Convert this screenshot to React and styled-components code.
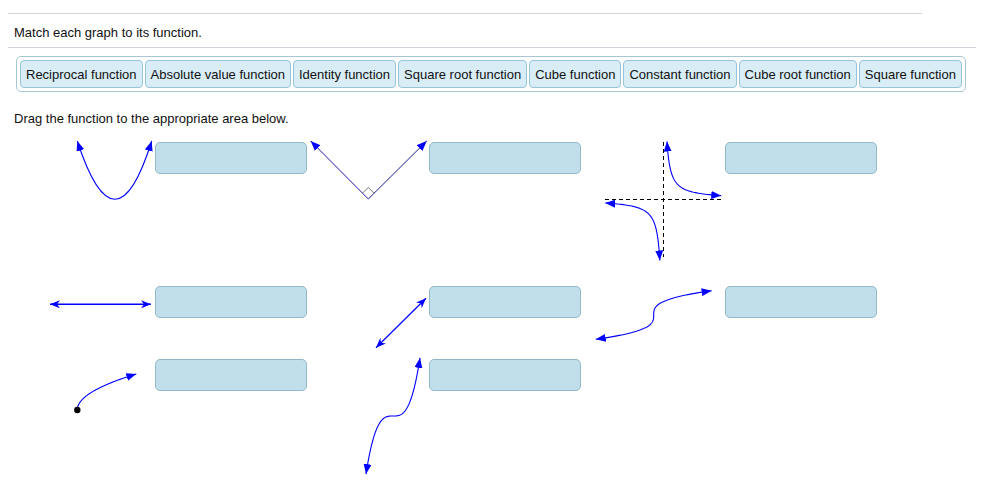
import React from "react";
import styled, { createGlobalStyle } from "styled-components";

const Global = createGlobalStyle`
  html, body { margin: 0; padding: 0; background: #fff; overflow: hidden; }
  body { font-family: "Liberation Sans", Arial, sans-serif; font-size: 13px; color: #111; }
`;

const Page = styled.div`
  width: 989px;
  height: 497px;
  display: flex;
  flex-direction: column;
  align-items: flex-start;
`;

const Rule = styled.div`
  width: ${(p) => p.$width}px;
  margin-left: 8px;
  margin-top: ${(p) => p.$top || 0}px;
  border-top: 1px solid #d3d3dc;
  height: 0;
`;

const Prompt = styled.div`
  padding: 11px 0 7px 14px;
  line-height: 15px;
`;

const Tray = styled.div`
  display: inline-flex;
  gap: 2px;
  margin: 8px 0 0 16px;
  padding: 3px;
  border: 1px solid #a8c6d2;
  border-radius: 5px;
`;

const Chip = styled.div`
  height: 28px;
  box-sizing: border-box;
  padding: 1px 5px 0;
  line-height: 25px;
  white-space: nowrap;
  background: #d9edf7;
  border: 1px solid #96c5d9;
  border-radius: 4px;
  color: #111;
`;

const Instruction = styled.div`
  margin: 19px 0 0 14px;
  line-height: 15px;
`;

const Canvas = styled.div`
  position: relative;
  width: 989px;
  height: 371px;
  overflow: hidden;
`;

const GraphLayer = styled.svg`
  position: absolute;
  left: 0;
  top: 0;
  pointer-events: none;
`;

const DropGrid = styled.div`
  position: relative;
  display: grid;
  padding: 16px 0 0 155px;
  grid-template-columns: 152px 122px 152px 144px 152px;
  grid-template-rows: 32px 112px 32px 41px 32px;
`;

const DropZone = styled.div`
  grid-column: ${(p) => p.$col};
  grid-row: ${(p) => p.$row};
  box-sizing: border-box;
  background: #c0dfea;
  border: 1px solid #93b8c7;
  border-radius: 5px;
`;

const functions = [
  "Reciprocal function",
  "Absolute value function",
  "Identity function",
  "Square root function",
  "Cube function",
  "Constant function",
  "Cube root function",
  "Square function",
];

const zones = [
  [1, 1],
  [3, 1],
  [5, 1],
  [1, 3],
  [3, 3],
  [5, 3],
  [1, 5],
  [3, 5],
];

const fmt = (pts) => pts.map(([x, y]) => `${x.toFixed(2)},${y.toFixed(2)}`).join(" ");

const sample = (n, f) => {
  const out = [];
  for (let i = 0; i <= n; i++) out.push(f(i / n));
  return out;
};

const BLUE = "#0000ff";

const hypA = sample(60, (t) => {
  const dx = 3.7 * Math.pow(58 / 3.7, t);
  return [663.3 + dx, 199.3 - 214 / dx];
});
const hypB = sample(60, (t) => {
  const d = 58 * Math.pow(3.5 / 58, t);
  return [663.3 - d, 199.3 + 214 / d];
});
const sqrtPts = sample(60, (t) => {
  const dx = 59 * t * t;
  return [77.3 + dx, 410 - 4.69 * Math.sqrt(dx)];
});
const cubePts = sample(100, (t) => {
  const dx = -27 + 54 * t;
  return [393 + dx, 416 - 0.00295 * dx * dx * dx];
});
const cbrtPts = sample(100, (t) => {
  const y = 339.3 - 48.6 * t;
  const u = (315 - y) / 6.28;
  return [653.7 + u * u * u, y];
});

function Graphs() {
  return (
    <GraphLayer width="989" height="371" viewBox="0 126 989 371">
      <defs>
        <marker id="tri" viewBox="0 0 10 8" refX="10" refY="4" markerWidth="10" markerHeight="8" markerUnits="userSpaceOnUse" orient="auto-start-reverse">
          <path d="M0,0 L10,4 L0,8 z" fill={BLUE} />
        </marker>
        <marker id="barb" viewBox="0 0 10 8" refX="10" refY="4" markerWidth="10" markerHeight="8" markerUnits="userSpaceOnUse" orient="auto-start-reverse">
          <path d="M0,0 L10,4 L0,8 L3,4 z" fill={BLUE} />
        </marker>
      </defs>

      {/* square function */}
      <path d="M77.3,141 Q115.3,257.5 151.7,141" fill="none" stroke={BLUE} strokeWidth="1.1" markerStart="url(#tri)" markerEnd="url(#tri)" />

      {/* absolute value */}
      <path d="M310.7,141 L368.3,199 L426.7,141" fill="none" stroke="#000090" strokeWidth="0.9" markerStart="url(#tri)" markerEnd="url(#tri)" />
      <polyline points="362.5,193.2 368.3,187.4 374.1,193.2" fill="none" stroke="#777" strokeWidth="1" />

      {/* reciprocal */}
      <line x1="663.5" y1="142" x2="663.5" y2="257" stroke="#000" strokeWidth="1" strokeDasharray="4 3" />
      <line x1="605" y1="199.5" x2="721" y2="199.5" stroke="#000" strokeWidth="1" strokeDasharray="4 3" />
      <polyline points={fmt(hypA)} fill="none" stroke={BLUE} strokeWidth="1.1" markerStart="url(#tri)" markerEnd="url(#tri)" />
      <polyline points={fmt(hypB)} fill="none" stroke={BLUE} strokeWidth="1.1" markerStart="url(#tri)" markerEnd="url(#tri)" />

      {/* constant */}
      <line x1="50" y1="304.3" x2="151" y2="304.3" stroke={BLUE} strokeWidth="1.5" markerStart="url(#barb)" markerEnd="url(#barb)" />

      {/* square root */}
      <polyline points={fmt(sqrtPts)} fill="none" stroke={BLUE} strokeWidth="1.1" markerEnd="url(#tri)" />
      <circle cx="77.3" cy="410" r="3.2" fill="#000" />

      {/* identity */}
      <line x1="376" y1="347.7" x2="426" y2="298.3" stroke={BLUE} strokeWidth="1.2" markerStart="url(#barb)" markerEnd="url(#barb)" />

      {/* cube */}
      <polyline points={fmt(cubePts)} fill="none" stroke={BLUE} strokeWidth="1.1" markerStart="url(#tri)" markerEnd="url(#tri)" />

      {/* cube root */}
      <polyline points={fmt(cbrtPts)} fill="none" stroke={BLUE} strokeWidth="1.1" markerStart="url(#tri)" markerEnd="url(#tri)" />
    </GraphLayer>
  );
}

export default function App() {
  return (
    <Page>
      <Global />
      <Rule $width={914} $top={13} />
      <Prompt>Match each graph to its function.</Prompt>
      <Rule $width={968} />
      <Tray>
        {functions.map((f) => (
          <Chip key={f}>{f}</Chip>
        ))}
      </Tray>
      <Instruction>Drag the function to the appropriate area below.</Instruction>
      <Canvas>
        <Graphs />
        <DropGrid>
          {zones.map(([c, r], i) => (
            <DropZone key={i} $col={c} $row={r} />
          ))}
        </DropGrid>
      </Canvas>
    </Page>
  );
}
